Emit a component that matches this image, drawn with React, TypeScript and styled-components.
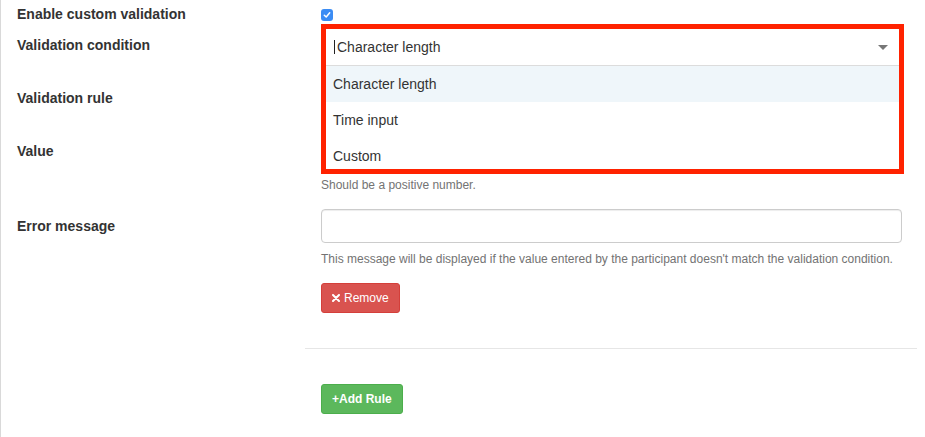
import React from 'react'
import styled, { createGlobalStyle } from 'styled-components'

const Global = createGlobalStyle`
  body {
    margin: 0;
    background: #fff;
    font-family: 'Liberation Sans', Arial, sans-serif;
    color: #333;
  }
  * { box-sizing: border-box; }
`

const Page = styled.div`
  min-height: 437px;
  border-left: 1px solid #d9d9d9;
  padding: 4px 8px 0 0;
`

const FormGroup = styled.div<{ $gap?: number }>`
  display: flex;
  margin-bottom: ${p => (p.$gap !== undefined ? p.$gap : 15)}px;
`

const Label = styled.div<{ $flat?: boolean }>`
  width: 304px;
  flex-shrink: 0;
  padding-left: 16px;
  padding-top: ${p => (p.$flat ? 0 : 7)}px;
  font-size: 14px;
  line-height: 20px;
  font-weight: bold;
  color: #333;
`

const Control = styled.div`
  flex: 1;
  padding: 0 15px 0 16px;
  position: relative;
`

const Checkbox = styled.span`
  display: flex;
  align-items: center;
  justify-content: center;
  width: 12px;
  height: 12px;
  margin-top: 5px;
  border-radius: 3px;
  background: #3b8cf4;
`

const Input = styled.div<{ $h?: number }>`
  height: ${p => p.$h || 34}px;
  border: 1px solid #ccc;
  border-radius: 4px;
  box-shadow: inset 0 1px 1px rgba(0, 0, 0, 0.075);
  background: #fff;
`

const SelectWrap = styled.div`
  position: relative;
`

const SelectHead = styled.div`
  height: 38px;
  display: flex;
  align-items: center;
  padding: 0 13px 0 12px;
  border: 1px solid #ccc;
  border-bottom-color: #dcdcdc;
  border-radius: 4px 4px 0 0;
  background: #fff;
  font-size: 14px;
  color: #333;
`

const Cursor = styled.span`
  width: 1px;
  height: 14px;
  background: #222;
  margin-right: 2px;
`

const Caret = styled.span`
  margin-left: auto;
  width: 0;
  height: 0;
  border-top: 5px solid #777;
  border-left: 5px solid transparent;
  border-right: 5px solid transparent;
`

const Menu = styled.ul`
  position: absolute;
  top: 100%;
  left: 0;
  right: 0;
  margin: 0;
  padding: 0;
  list-style: none;
  background: #fff;
  z-index: 2;
`

const Option = styled.li<{ $active?: boolean }>`
  height: 36px;
  display: flex;
  align-items: center;
  padding-left: 12px;
  font-size: 14px;
  color: #333;
  background: ${p => (p.$active ? '#eff6fa' : '#fff')};
`

const Highlight = styled.div`
  position: absolute;
  top: -4px;
  left: 0;
  right: -2px;
  height: 150px;
  border: 5px solid #ff2200;
  z-index: 3;
  pointer-events: none;
`

const Help = styled.div<{ $top?: number }>`
  margin-top: ${p => p.$top || 5}px;
  font-size: 12px;
  line-height: 17px;
  color: #737373;
`

const Button = styled.button<{ $variant: 'danger' | 'success'; $top?: number }>`
  display: inline-flex;
  align-items: center;
  gap: 4px;
  height: 30px;
  margin-top: ${p => p.$top || 0}px;
  padding: 0 10px;
  border-radius: 3px;
  border: 1px solid ${p => (p.$variant === 'danger' ? '#d43f3a' : '#4cae4c')};
  background: ${p => (p.$variant === 'danger' ? '#d9534f' : '#5cb85c')};
  color: #fff;
  font-family: inherit;
  font-size: 12px;
  font-weight: ${p => (p.$variant === 'danger' ? 'normal' : 'bold')};
`

const Divider = styled.div`
  margin: 35px 0 35px 304px;
  height: 1px;
  background: #e6e6e6;
`

const Footer = styled.div`
  padding-left: 320px;
`

export default function App() {
  return (
    <Page>
      <Global />
      <FormGroup $gap={4}>
        <Label $flat>Enable custom validation</Label>
        <Control>
          <Checkbox>
            <svg width="8" height="8" viewBox="0 0 8 8">
              <path d="M1.3 4.2 L3.2 6 L6.7 1.8" fill="none" stroke="#fff" strokeWidth="1.5" strokeLinecap="round" strokeLinejoin="round" />
            </svg>
          </Checkbox>
        </Control>
      </FormGroup>

      <FormGroup>
        <Label>Validation condition</Label>
        <Control>
          <SelectWrap>
            <SelectHead>
              <Cursor />
              Character length
              <Caret />
            </SelectHead>
            <Menu>
              <Option $active>Character length</Option>
              <Option>Time input</Option>
              <Option>Custom</Option>
            </Menu>
            <Highlight />
          </SelectWrap>
        </Control>
      </FormGroup>

      <FormGroup>
        <Label>Validation rule</Label>
        <Control>
          <Input $h={38} />
        </Control>
      </FormGroup>

      <FormGroup>
        <Label>Value</Label>
        <Control>
          <Input $h={38} />
          <Help>Should be a positive number.</Help>
        </Control>
      </FormGroup>

      <FormGroup $gap={0}>
        <Label>Error message</Label>
        <Control>
          <Input />
          <Help $top={8}>
            This message will be displayed if the value entered by the participant doesn't match the validation condition.
          </Help>
          <Button $variant="danger" $top={15}>
            <svg width="8" height="8" viewBox="0 0 8 8">
              <path d="M1 1 L7 7 M7 1 L1 7" stroke="#fff" strokeWidth="2" strokeLinecap="round" />
            </svg>
            Remove
          </Button>
        </Control>
      </FormGroup>

      <Divider />

      <Footer>
        <Button $variant="success">+Add Rule</Button>
      </Footer>
    </Page>
  )
}
